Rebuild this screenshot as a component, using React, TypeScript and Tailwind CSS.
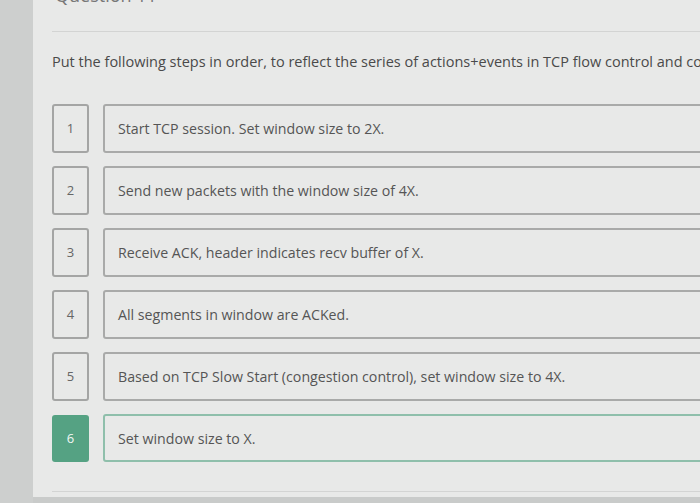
import React from "react";

const steps = [
  "Start TCP session. Set window size to 2X.",
  "Send new packets with the window size of 4X.",
  "Receive ACK, header indicates recv buffer of X.",
  "All segments in window are ACKed.",
  "Based on TCP Slow Start (congestion control), set window size to 4X.",
  "Set window size to X.",
];

// one numbered row: rank box + step text box
const StepRow = ({ n, text, active }: { n: number; text: string; active?: boolean }) => {
  return (
    <div className="flex items-center gap-[14px] h-[49px]">
      <div
        className={
          active
            ? "w-[37px] h-[47px] shrink-0 flex items-center justify-center rounded-[3px] bg-[#55a283] text-[#f2f7f4] text-[13px]"
            : "w-[37px] h-[49px] shrink-0 flex items-center justify-center rounded-[3px] border-2 border-[#a4a5a4] text-[#666] text-[13px]"
        }
      >
        {n}
      </div>
      <div
        className={
          active
            ? "w-[640px] h-[48px] shrink-0 flex items-center pl-[13px] rounded-[3px] border-2 border-[#8fbfab] text-[14.2px] text-[#555]"
            : "w-[640px] h-[49px] shrink-0 flex items-center pl-[13px] rounded-[3px] border-2 border-[#a9aaa9] text-[14.2px] text-[#555]"
        }
      >
        {text}
      </div>
    </div>
  );
};

export default function App() {
  return (
    <div
      className="w-[700px] h-[503px] flex overflow-hidden bg-[#c9cbca]"
      style={{ fontFamily: '"Open Sans", sans-serif' }}
    >
      <div className="w-[33px] shrink-0 bg-[#cdcfce]" />
      <div className="flex-1 h-[497px] bg-[#e8e9e8] overflow-hidden pl-[19px]">
        <div className="h-[32px] relative border-b border-[#d3d4d3]">
          <div className="absolute left-[3px] -top-[18px] text-[18px] text-[#777]">Question 11</div>
        </div>
        <p className="mt-[19px] text-[14.5px] text-[#4a4a4a] whitespace-nowrap">
          Put the following steps in order, to reflect the series of actions+events in TCP flow control and congestion control.
        </p>
        <div className="mt-[31px] flex flex-col gap-[13px]">
          {steps.map((s, i) => (
            <StepRow key={i} n={i + 1} text={s} active={i === 5} />
          ))}
        </div>
        <div className="mt-[28px] border-t border-[#d3d4d3]" />
      </div>
    </div>
  );
}
